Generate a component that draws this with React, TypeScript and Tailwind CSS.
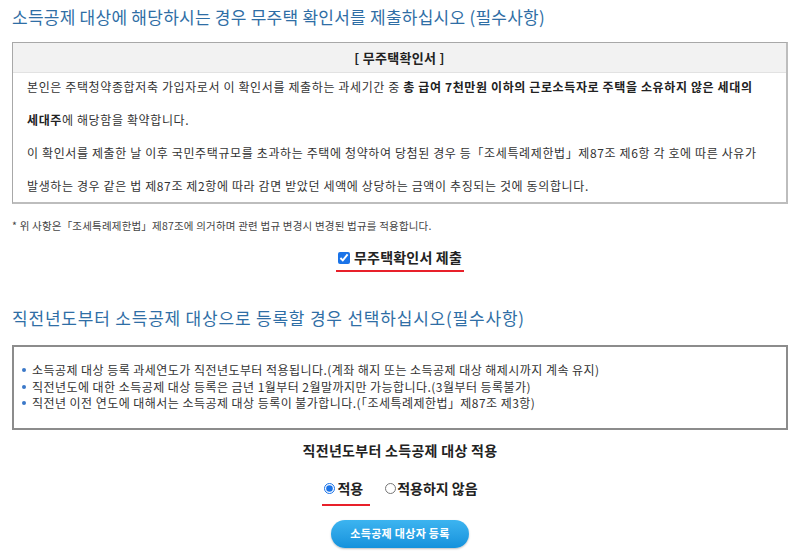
import React from "react";

const F = { fontFamily: '"Noto Sans CJK KR", "Noto Sans", sans-serif' };

export default function App() {
  return (
    <div className="w-[800px] h-[560px] bg-white overflow-hidden px-3 text-[#333]" style={F}>
      <h2 className="text-[17px] leading-[34px] text-[#2f6ea5] font-normal tracking-[0.25px]">
        소득공제 대상에 해당하시는 경우 무주택 확인서를 제출하십시오 (필수사항)
      </h2>
      <div className="mt-[8px] border border-[#a8a8a8] border-r-2 border-b-2 border-r-[#bdbdbd] border-b-[#bdbdbd]">
        <div className="h-[30px] bg-[#f2f2f2] border-b border-[#e2e2e2] flex items-center justify-center text-[13px] font-bold text-[#222] tracking-[0.3px]">
          [ 무주택확인서 ]
        </div>
        <div className="px-[14px] pb-0 text-[12px] leading-[33px] text-[#333] -mt-[3px] tracking-[0.62px]">
          <p>
            본인은 주택청약종합저축 가입자로서 이 확인서를 제출하는 과세기간 중{" "}
            <b className="text-[#222]">총 급여 7천만원 이하의 근로소득자로 주택을 소유하지 않은 세대의</b>
            <br />
            <b className="text-[#222]">세대주</b>에 해당함을 확약합니다.
          </p>
          <p>
            이 확인서를 제출한 날 이후 국민주택규모를 초과하는 주택에 청약하여 당첨된 경우 등「조세특례제한법」제87조 제6항 각 호에 따른 사유가
            <br />
            발생하는 경우 같은 법 제87조 제2항에 따라 감면 받았던 세액에 상당하는 금액이 추징되는 것에 동의합니다.
          </p>
        </div>
      </div>
      <p className="mt-[14px] text-[10.5px] leading-[16px] text-[#444] tracking-[0.2px]">
        * 위 사항은「조세특례제한법」제87조에 의거하며 관련 법규 변경시 변경된 법규를 적용합니다.
      </p>
      <div className="mt-[13px] flex justify-center">
        <label className="flex items-center gap-[4px] border-b-2 border-[#e8202a] pb-[3px] px-[2px]">
          <input type="checkbox" checked readOnly className="w-[12px] h-[12px] accent-[#1a73e8] mt-[2px]" />
          <span className="text-[14px] font-bold text-[#222] leading-[20px] tracking-[0.2px]">무주택확인서 제출</span>
        </label>
      </div>
      <h2 className="mt-[29px] text-[17px] leading-[34px] text-[#2f6ea5] font-normal tracking-[0.8px]">
        직전년도부터 소득공제 대상으로 등록할 경우 선택하십시오(필수사항)
      </h2>
      <div className="mt-[10px] border-2 border-[#8c8c8c] pt-[15px] pb-[16px] px-[8px]">
        <ul className="text-[12px] leading-[16.5px] text-[#333] tracking-[0.45px]">
          <li className="flex items-center gap-[6px]">
            <span className="w-[4px] h-[4px] rounded-full bg-[#3a78c8] shrink-0" />
            소득공제 대상 등록 과세연도가 직전년도부터 적용됩니다.(계좌 해지 또는 소득공제 대상 해제시까지 계속 유지)
          </li>
          <li className="flex items-center gap-[6px]">
            <span className="w-[4px] h-[4px] rounded-full bg-[#3a78c8] shrink-0" />
            직전년도에 대한 소득공제 대상 등록은 금년 1월부터 2월말까지만 가능합니다.(3월부터 등록불가)
          </li>
          <li className="flex items-center gap-[6px]">
            <span className="w-[4px] h-[4px] rounded-full bg-[#3a78c8] shrink-0" />
            직전년 이전 연도에 대해서는 소득공제 대상 등록이 불가합니다.(「조세특례제한법」제87조 제3항)
          </li>
        </ul>
      </div>
      <div className="mt-[10px] text-center text-[14px] font-bold leading-[20px] text-[#222] tracking-[0.3px]">
        직전년도부터 소득공제 대상 적용
      </div>
      <div className="mt-[18px] flex justify-center items-start gap-[15px] text-[14px] font-bold text-[#222]">
        <label className="flex items-center gap-[2px] border-b-2 border-[#e8202a] pb-[6px] pl-[2px] pr-[7px]">
          <input type="radio" name="apply" checked readOnly className="w-[11px] h-[11px] accent-[#1a73e8] mt-[2px]" />
          <span className="leading-[20px]">적용</span>
        </label>
        <label className="flex items-center gap-[1px] pb-[6px]">
          <input type="radio" name="apply" readOnly className="w-[11px] h-[11px] mt-[2px]" />
          <span className="leading-[20px]">적용하지 않음</span>
        </label>
      </div>
      <div className="mt-[14px] flex justify-center">
        <button className="h-[28px] px-[19px] rounded-full bg-gradient-to-b from-[#3cb4f0] to-[#1492dc] text-white text-[11px] font-bold tracking-[0.3px] shadow-[0_1px_2px_rgba(0,0,0,0.25)]">
          소득공제 대상자 등록
        </button>
      </div>
    </div>
  );
}
